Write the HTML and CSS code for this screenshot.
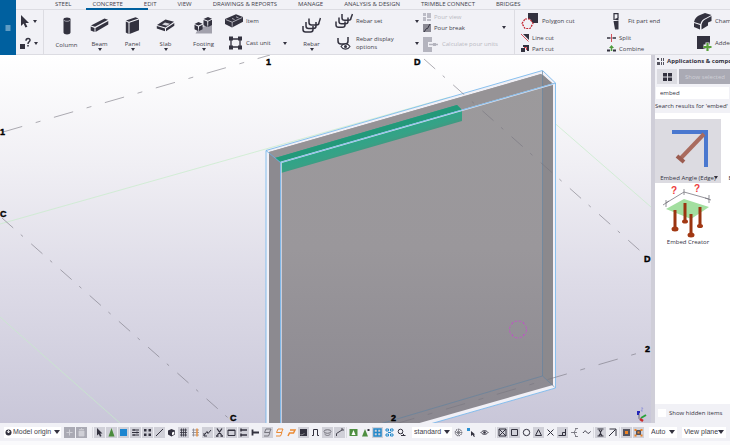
FILE: index.html
```html
<!DOCTYPE html>
<html lang="en">
<head>
    <meta charset="UTF-8">
    <meta name="viewport" content="width=device-width, initial-scale=1.0">
    <title>Model editor</title>
    <link rel="stylesheet" href="styles.css">
</head>
<body>

<header class="ribbon">
    <button class="main-menu" aria-label="Menu">
        <svg width="6" height="6" viewBox="0 0 6 6"><path d="M0.5 1h5M0.5 3h5M0.5 5h5" stroke="#d5e6f2" stroke-width="0.9"/></svg>
    </button>
    <div class="ribbon-body">
        <nav class="tabs">
            <a href="#">STEEL</a>
            <a href="#" class="active">CONCRETE</a>
            <a href="#">EDIT</a>
            <a href="#">VIEW</a>
            <a href="#">DRAWINGS &amp; REPORTS</a>
            <a href="#">MANAGE</a>
            <a href="#">ANALYSIS &amp; DESIGN</a>
            <a href="#">TRIMBLE CONNECT</a>
            <a href="#">BRIDGES</a>
        </nav>
        <div class="tools">
            <div class="stack pick">
                <button class="tool tall" aria-label="Select">
                    <svg width="10" height="13" viewBox="0 0 10 13"><path d="M1 0v11l2.6-2.4 1.8 4 2-.9-1.9-3.8H9z" fill="#33323f"/></svg>
                    <i class="caret"></i>
                </button>
                <button class="tool tall" aria-label="Inquire">
                    <svg width="11" height="13" viewBox="0 0 11 13"><path d="M0 7h5v5H0z" fill="#33323f"/><path d="M6 3.8C6 .6 10.2.8 10 3.3 9.9 4.900 8 4.800 8 7M8 8v1.500" fill="none" stroke="#33323f" stroke-width="1.500"/></svg>
                    <i class="caret"></i>
                </button>
            </div>

            <div class="big-tools">
                <button class="big plain">
                    <svg width="8" height="18" viewBox="0 0 8 18"><path d="M.5 2.500v13c0 2.500 7 2.500 7 0v-13z" fill="#33323f"/><ellipse cx="4" cy="2.200" rx="3.500" ry="1.700" fill="#33323f"/><path d="M.8 3.200c1 1.500 5.400 1.500 6.400 0" fill="none" stroke="#c9c9d2" stroke-width=".7"/></svg>
                    <span>Column</span>
                </button>
                <button class="big">
                    <svg width="19" height="16" viewBox="0 0 19 16"><path d="M1 8.500 14.500 1.500l3.500 1.200L5 9.800z" fill="#33323f"/><path d="M.7 9.500 4.500 11v4L.7 13.500zM5.500 11 18.300 4v3.500L5.500 15z" fill="#33323f"/></svg>
                    <span>Beam</span><i class="caret"></i>
                </button>
                <button class="big">
                    <svg width="15" height="17" viewBox="0 0 15 17"><path d="M1 3.500 10.500.3 13.500 1.500 4 4.800z" fill="#33323f"/><path d="M.8 4.500 3.500 5.700V17L.8 15.500zM4.500 5.700 14 2.400v10.800L4.500 17z" fill="#33323f"/></svg>
                    <span>Panel</span><i class="caret"></i>
                </button>
                <button class="big">
                    <svg width="19" height="14" viewBox="0 0 19 14"><path d="M1 7 9.500 1.500l8.500 2.300L9.500 9.600z" fill="#33323f"/><path d="M.8 8 9 10.600v2.700L.8 10.600zM10 10.500 18.300 5v2.800L10 13.300z" fill="#33323f"/><path d="M6 6.500l5 1.300 3-2-5-1.300z" fill="#d5d5dc"/></svg>
                    <span>Slab</span><i class="caret"></i>
                </button>
                <button class="big wide">
                    <svg width="19" height="18" viewBox="0 0 19 18"><path d="M5 12 18 8v9.500H1.500z" fill="#a2a1ac"/><path d="M.5 8 4.500 6l4 1.700-4 1.900zM.5 8.800 4 10.500V15L.5 13.200zM5 10.500l3.600-1.700v4.500L5 15zM9.500 3 14 1l4 1.700-4 2zM9.500 4l3.800 1.500v5.400L9.500 9.200zM14.200 5.500 18 3.700v5.200l-3.800 2z" fill="#33323f"/></svg>
                    <span>Footing</span><i class="caret"></i>
                </button>
            </div>

            <div class="stack cast">
                <button class="tool tall">
                    <svg width="18" height="14" viewBox="0 0 18 14"><path d="M0 5 11 .3 18 3v4.800L7 13.500 0 10z" fill="#33323f"/><path d="M.8 5.600 7.200 8.200 17.300 3.500M7.200 8.200v4.500M7 4.500l2.500 1M11 2.800l2.500 1" fill="none" stroke="#c9c9d2" stroke-width=".8"/></svg>
                    <span>Item</span>
                </button>
                <button class="tool tall">
                    <svg width="18" height="14" viewBox="0 0 18 14"><path d="M6 3h9v8H6z" fill="none" stroke="#33323f" stroke-width="1.300"/><path d="M4 .5h4v4H4zM13 .5h4v4h-4zM4 9.500h4v4H4zM13 9.500h4v4h-4z" fill="#33323f"/></svg>
                    <span>Cast unit</span>
                    <i class="caret push"></i>
                </button>
            </div>

            <div class="big-tools">
                <button class="big">
                    <svg width="19" height="17" viewBox="0 0 19 17"><g fill="none" stroke="#33323f" stroke-width="1.500"><path d="M7 1.500v4c0 2 1 2.500 2.500 2.500h5c1.500 0 2.500-1 2.500-2.500L18.500 1M4 5v4c0 2 1 2.500 2.500 2.500h5c1.500 0 2.500-1 2.500-2.500V5M1 9v3.500C1 14.500 2 15 3.500 15h5c1.500 0 2.500-1 2.500-2.500V9"/></g></svg>
                    <span>Rebar</span><i class="caret"></i>
                </button>
            </div>

            <div class="stack rebars">
                <button class="tool tall">
                    <svg width="18" height="16" viewBox="0 0 18 16"><g fill="none" stroke="#33323f" stroke-width="1.500"><path d="M7 1v4c0 1.700 1 2.300 2.500 2.300h4C15 7.300 16 6.500 16 5l1.500-4M4 4.500v4c0 1.700 1 2.300 2.500 2.300h4c1.500 0 2.500-.8 2.500-2.300v-4M1 8.500V12c0 1.700 1 2.300 2.500 2.300h4c1.500 0 2.500-.8 2.500-2.300V8.500"/></g></svg>
                    <span>Rebar set</span>
                    <i class="caret push"></i>
                </button>
                <button class="tool tall">
                    <svg width="18" height="13" viewBox="0 0 18 13"><path d="M3 1v3c0 2 1 3 3 3h4c2 0 3-1 3-3V0" fill="none" stroke="#33323f" stroke-width="1.500"/><path d="M6 9.500c2-3.500 7-3.500 9 0-2 3.500-7 3.500-9 0z" fill="#f1f1f6" stroke="#33323f" stroke-width="1.100"/><circle cx="10.500" cy="9.500" r="1.500" fill="#33323f"/></svg>
                    <span>Rebar display<br>options</span>
                    <i class="caret push"></i>
                </button>
            </div>

            <div class="stack pour">
                <button class="tool" disabled>
                    <svg width="8" height="8" viewBox="0 0 8 8"><path d="M0 0h3v3H0zM4 0h4v5H4zM0 4h3v4H0zM4 6h4v2H4z" fill="#bcbcc6"/></svg>
                    <span>Pour view</span>
                </button>
                <button class="tool">
                    <svg width="8" height="8" viewBox="0 0 8 8"><path d="M0 0h8v8H0z" fill="#8a8993"/><path d="M1 8 3.500 4.500h1L7 0" fill="none" stroke="#33323f"/></svg>
                    <span>Pour break</span>
                    <i class="caret push"></i>
                </button>
                <button class="tool tall" disabled>
                    <svg width="16" height="15" viewBox="0 0 16 15"><path d="M0 0h9v5H5v5h4v5H0z" fill="#b4b4be"/><path d="M6 7.500h9" stroke="#b4b4be" stroke-width="1.500"/><path d="M10 6h3v3h-3z" fill="#b4b4be"/></svg>
                    <span>Calculate pour units</span>
                </button>
            </div>

            <div class="stack cuts">
                <button class="tool tall">
                    <svg width="18" height="17" viewBox="0 0 18 17"><path d="M7 0h10v10h-6L7 6z" fill="#33323f"/><path d="M4 6h5l3 4.500-3 5H4l-3-5z" fill="#f1f1f6" stroke="#c3242f" stroke-width="1.200" stroke-dasharray="2 1"/></svg>
                    <span>Polygon cut</span>
                </button>
                <button class="tool">
                    <svg width="8" height="8" viewBox="0 0 8 8"><path d="M2 0h6v6z" fill="#33323f"/><path d="M0 0l7.500 7.500" stroke="#d0404a" stroke-width=".9"/></svg>
                    <span>Line cut</span>
                </button>
                <button class="tool">
                    <svg width="8" height="8" viewBox="0 0 8 8"><path d="M2 0h6v6H6V2H2z" fill="#33323f"/><path d="M0 3h4v4H0z" fill="#33323f"/><path d="M3 2.500h2.500V5" fill="none" stroke="#d0404a"/></svg>
                    <span>Part cut</span>
                </button>
            </div>

            <div class="stack joins">
                <button class="tool tall indent">
                    <svg width="12" height="17" viewBox="0 0 12 17"><path d="M.5 8h5v8.500H2zM.5 6.500l5-2v3z" fill="#33323f"/><path d="M1 7V.7h4V5" fill="none" stroke="#33323f" stroke-width="1.200"/></svg>
                    <span>Fit part end</span>
                </button>
                <button class="tool">
                    <svg width="9" height="8" viewBox="0 0 9 8"><path d="M0 4h3.500M5.500 4H9" stroke="#33323f" stroke-width="1.500"/><path d="M4.500 0v8" stroke="#d0404a" stroke-width=".9"/></svg>
                    <span>Split</span>
                </button>
                <button class="tool">
                    <svg width="9" height="8" viewBox="0 0 9 8"><path d="M0 5.500h3M6 5.500h3" stroke="#33323f" stroke-width="2"/><path d="M4.500 0 7 3H5.300v3H3.700V3H2z" fill="#4f9a3c"/></svg>
                    <span>Combine</span>
                </button>
            </div>

            <div class="stack details">
                <button class="tool tall">
                    <svg width="18" height="17" viewBox="0 0 18 17"><path d="M0 9C1 5 3 3 6 2l5-2 6.500 2L12 5C9 6 7 8 6.500 11z" fill="#33323f"/><path d="M0 10l6 2v4.500L0 14zM7.500 12c.5-3 2-5 4.500-6l5.500-3v5L14 9.500v3L7.500 16.500z" fill="#33323f"/></svg>
                    <span>Chamfer</span>
                </button>
                <button class="tool tall">
                    <svg width="18" height="15" viewBox="0 0 18 15"><path d="M3 0h13v13H3z" fill="#33323f"/><path d="M13.500 6.500v8M9.500 10.500h8" stroke="#f1f1f6" stroke-width="4"/><path d="M13.500 7v8M9.500 11h8" stroke="#5aa13c" stroke-width="2.200"/></svg>
                    <span>Added material</span>
                </button>
            </div>
        </div>
    </div>
</header>

<main class="workspace">
    <section class="viewport">
        <svg class="scene" viewBox="0 54 651 369" preserveAspectRatio="xMinYMin slice">
            <defs>
                <linearGradient id="front" x1="0" y1="0" x2="0" y2="1">
                    <stop offset="0" stop-color="#9c9a9c"/>
                    <stop offset="0.5" stop-color="#9a979b"/>
                    <stop offset="1" stop-color="#8b8890"/>
                </linearGradient>
                <linearGradient id="embed" gradientUnits="userSpaceOnUse" x1="350" y1="136" x2="356" y2="156">
                    <stop offset="0" stop-color="#2ba588"/>
                    <stop offset="0.6" stop-color="#36a286"/>
                    <stop offset="1" stop-color="#4c8f7c"/>
                </linearGradient>
            </defs>

            <!-- work area -->
            <g class="work-area">
                <path d="M0 223 450 96M0 316l121 107M543 112l108 94"/>
            </g>

            <!-- grid lines behind the panel -->
            <g class="grid-line">
                <path class="across" d="M3 131 270 54"/>
                <path class="deep" d="M2 217l233 206"/>
            </g>

            <!-- concrete panel -->
            <path d="M266 150 543 69l13 13v305l-126 36H266z" fill="#f1f0f6"/>
            <path d="M269 151l272-78 12 10v301l-137 39H269z" fill="url(#front)"/>
            <path d="M269 151l12 10v262h-12z" fill="#8c8a90"/>
            <path d="M269 151l272-78 12 10-272 78z" fill="#969396"/>
            <path d="M543 74l10 9v301l-10-9z" fill="#8b898d"/>
            <path d="M275 157 457 104l5 5v11l-181 52v-10z" fill="url(#embed)"/>
            <path d="M275 157 457 104l5 5-181 52z" fill="#23997a"/>
            <path class="hidden-edge" d="M542.500 70v305L380 423M542.500 375l12 11"/>
            <path class="light-edge" d="M280.500 161.500 555 82.500M281 161v262"/>
            <path class="edge" d="M266 423V149.500L542.500 69.500l13 12.500v305L430 423M266 149.500l14.500 12 275-79.500M280.500 161.500V423"/>

            <g class="grid-line">
                <path class="deep" d="M424 58l222 197"/>
                <path class="across" d="M395 423 642 351"/>
            </g>

            <circle cx="518" cy="328.500" r="8.500" fill="none" stroke="#bb5fc0" stroke-dasharray="3 1.500"/>
            <path d="M512 322h1M523 322h1M512 334h1M523 334h1" stroke="#c04cc8" stroke-width="1.500"/>

            <g class="grid-label">
                <text x="266" y="64">1</text>
                <text x="414" y="64">D</text>
                <text x="0" y="134">1</text>
                <text x="0" y="216">C</text>
                <text x="230" y="420">C</text>
                <text x="391" y="420">2</text>
                <text x="644" y="261">D</text>
                <text x="645" y="351">2</text>
            </g>

            <!-- axis marker -->
            <g fill="none">
                <path d="M639 412v5l3 2" stroke="#9a98a5" stroke-width="2"/>
                <path d="M638 414v-4M637 411h3" stroke="#2325b8" stroke-width="2"/>
                <path d="M641 417l5-3" stroke="#29a33b" stroke-width="2"/>
                <path d="M640 418l3 2" stroke="#c92b2b" stroke-width="2.500"/>
                <path d="M641 407l2 0-2 3h2" stroke="#8b8cd8" stroke-width=".7"/>
            </g>
        </svg>
    </section>

    <aside class="catalog">
        <h2 class="catalog-title">
            <svg width="7" height="7" viewBox="0 0 7 7"><path d="M0 0h2v2H0zM0 4h3v3H0zM4 0h1v3H4zM6 0h1v3H6zM4 4h1v3H4zM6 4h1v3H6z" fill="#55545f"/></svg>
            Applications &amp; components
        </h2>
        <div class="catalog-bar">
            <button class="view-mode" aria-label="Thumbnails">
                <svg width="9" height="8" viewBox="0 0 9 8"><path d="M0 0h4v3.500H0zM5 0h4v3.500H5zM0 4.500h4V8H0zM5 4.500h4V8H5z" fill="#33323f"/></svg>
            </button>
            <button class="show-selected" disabled>Show selected</button>
        </div>
        <input class="search" type="text" value="embed" aria-label="Search">
        <p class="result-text">Search results for 'embed'</p>
        <div class="tiles">
            <button class="tile selected">
                <svg width="66" height="54" viewBox="0 0 66 54"><path d="M17 10h36v37h-4V14H17z" fill="#4a78cf"/><path d="M49 14 26 38" stroke="#a96b5e" stroke-width="4"/><path d="M22 36l7 6" stroke="#9b5c50" stroke-width="4"/></svg>
                <span>Embed Angle (Edge)</span>
                <i class="caret tile-caret"></i>
            </button>
            <button class="tile">
                <svg width="66" height="54" viewBox="0 0 66 54"></svg>
                <span>Embed Plate (Face)</span>
            </button>
            <button class="tile">
                <svg width="66" height="54" viewBox="0 0 66 54">
                    <path d="M11 25 29 15l25 8-18 12z" fill="#a3dfa0"/>
                    <path d="M20 26v20M30 19v18M36 30v22M45 23v19" stroke="#9a3410" stroke-width="3"/>
                    <g fill="#a23813"><ellipse cx="20" cy="45" rx="3.500" ry="2.500"/><ellipse cx="30" cy="37.500" rx="3" ry="2"/><ellipse cx="36" cy="51" rx="3.500" ry="2.500"/><ellipse cx="45" cy="42" rx="3" ry="2"/></g>
                    <path d="M11 19 29 8l25 7M11 16v7M29 5v6M54 11v8M8 21l6-4M50 14l6 2" fill="none" stroke="#77767f" stroke-width=".8"/>
                    <text class="mark" x="16" y="10">?</text>
                    <text class="mark" x="39" y="8">?</text>
                </svg>
                <span>Embed Creator</span>
            </button>
        </div>
        <label class="hidden-items"><input type="checkbox"> Show hidden items</label>
    </aside>
</main>

<footer class="status">
    <label class="picker origin">
        <svg width="7" height="7" viewBox="0 0 7 7"><circle cx="3.500" cy="3.500" r="3" fill="#33323f"/><path d="M3.500 1v3M2 2l1.500 2L5 2" stroke="#fff" stroke-width=".8" fill="none"/></svg>
        <select aria-label="Origin"><option>Model origin</option></select>
        <i class="caret"></i>
    </label>
    <div class="group actions">
        <button class="off" disabled aria-label="Add"><svg viewBox="0 0 11 11"><path d="M5.500 2.500v6M2.500 5.500h6" stroke="#d0d0d7"/></svg></button>
        <button class="off" disabled aria-label="Delete"><svg viewBox="0 0 11 11"><path d="M3 4h5v5H3zM3 2.500h5M5 1.500h1" fill="#d0d0d7" stroke="#d0d0d7" stroke-width=".8"/></svg></button>
    </div>
    <div class="group first">
        <button class="on" aria-label="Select all"><svg viewBox="0 0 11 11"><path d="M3 1v7.500l1.800-1.600L6 9.800l1.500-.7-1.300-2.700h2.300z" fill="#33323f"/></svg></button>
        <button class="on" aria-label="Components"><svg viewBox="0 0 11 11"><path d="M5.500 1 8.500 9.500h-6z" fill="#4a8b3c"/></svg></button>
        <button class="on" aria-label="Parts"><svg viewBox="0 0 11 11"><path d="M2 2h7v7H2z" fill="#1d86d0"/></svg></button>
        <button class="on" aria-label="Surfaces"><svg viewBox="0 0 11 11"><path d="M2 3h7M2 5.500h7M2 8h7M4 2v2M7 4.500v2M4 7v2" stroke="#33323f"/></svg></button>
        <button class="on" aria-label="Points"><svg viewBox="0 0 11 11"><path d="M2 2h2.500v2.500H2zM6.500 2H9v2.500H6.500zM2 6.500h2.500V9H2zM6.500 6.500H9V9H6.500z" fill="#33323f"/></svg></button>
        <button class="on" aria-label="Lines"><svg viewBox="0 0 11 11"><path d="M2 9 9 2" stroke="#33323f"/></svg></button>
        <button aria-label="Solids"><svg viewBox="0 0 11 11"><path d="M2 3.500 5.500 2 9 3.500v4L5.500 9.500 2 7.500z" fill="#33323f"/><path d="M6 5.500 8.300 4.500v2.700L6 8.300z" fill="#fff"/></svg></button>
        <button class="on" aria-label="Grids"><svg viewBox="0 0 11 11"><path d="M2 3h7M2 5.500h7M2 8h7M3.500 1.500v8M5.500 1.500v8M7.500 1.500v8" stroke="#33323f" stroke-width=".8"/></svg></button>
        <button aria-label="Grid line"><svg viewBox="0 0 11 11"><path d="M2 3h7M2 5.500h7M2 8h7M3.500 1.500v8" stroke="#85848e" stroke-width=".8"/><path d="M7 1.500v8" stroke="#e59042" stroke-width="1.500"/></svg></button>
        <button class="on" aria-label="Welds"><svg viewBox="0 0 11 11"><path d="M2 8.500 5 4.500l1 2L9 3M2 6v3h3" stroke="#33323f" fill="none"/></svg></button>
        <button class="on" aria-label="Cuts"><svg viewBox="0 0 11 11"><path d="M3 1.500 7.500 8M8 1.500 3.500 8M2 9h2.500M6.500 9H9" stroke="#33323f" stroke-width="1.300"/></svg></button>
        <button class="on" aria-label="Views"><svg viewBox="0 0 11 11"><path d="M2 3h7v5.500H2zM2 3.500h7" stroke="#33323f" fill="none"/></svg></button>
        <button class="on" aria-label="Bolts"><svg viewBox="0 0 11 11"><path d="M3 1.500v3M3 6.500v3M3 3h6M3 8h6" stroke="#33323f" stroke-width="1.500"/></svg></button>
        <button aria-label="Single bolts"><svg viewBox="0 0 11 11"><path d="M2.500 2.500v6M2.500 5.500H9" stroke="#33323f" stroke-width="1.800"/></svg></button>
        <button class="on" aria-label="Rebar sets"><svg viewBox="0 0 11 11"><path d="M4 2h5L7.500 5.500h-5zM4 5.500h4L6.500 9H2" stroke="#77767f" fill="none"/></svg></button>
        <button aria-label="Rebar groups"><svg viewBox="0 0 11 11"><path d="M4 2h5L7.500 5.500h-5zM4 5.500h4L6.500 9H2" stroke="#ea8a35" fill="none"/></svg></button>
        <button aria-label="Rebars"><svg viewBox="0 0 11 11"><path d="M4 3h5L7.500 6H3.500L2 9" stroke="#ea8a35" stroke-width="1.500" fill="none"/></svg></button>
        <button class="on" aria-label="Pours"><svg viewBox="0 0 11 11"><path d="M2 2h7v7H2z" fill="#33323f"/><path d="M2.500 7.500c2 1 3-1 4-1" stroke="#bbb" stroke-width=".6" fill="none"/></svg></button>
        <button aria-label="Loads"><svg viewBox="0 0 11 11"><path d="M2 8.500h1.500v-6h4v6H9" stroke="#33323f" fill="none"/></svg></button>
        <button class="on" aria-label="Planes"><svg viewBox="0 0 11 11"><ellipse cx="5.500" cy="4.500" rx="3.500" ry="1.800" stroke="#77767f" fill="none"/><path d="M2.500 7c2 2 4 2 6 0" stroke="#77767f" fill="none"/></svg></button>
        <button class="on" aria-label="Distances"><svg viewBox="0 0 11 11"><path d="M2.500 9V6.500L8 3M7 2h2v2" stroke="#44434f" fill="none"/></svg></button>
    </div>
    <div class="group">
        <button aria-label="Select components"><svg viewBox="0 0 11 11"><path d="M1.500 2h8v7h-8z" fill="#4f8f42"/><path d="M5.500 3 7.500 8h-4z" fill="#fff"/></svg></button>
        <button aria-label="Select in components"><svg viewBox="0 0 11 11"><path d="M5 2 8 9.500H2z" fill="#4f8f42"/><path d="M7.500 2h2v2h-2z" fill="#33323f"/></svg></button>
        <button class="on" aria-label="Select assemblies"><svg viewBox="0 0 11 11"><path d="M2 2h7v7H2zM2 5.500h7M5.500 2v7" stroke="#2489ca" stroke-width="1.500" fill="none"/></svg></button>
        <button aria-label="Select in assemblies"><svg viewBox="0 0 11 11"><path d="M2 2h2.500v2H2zM6.500 2H9v2H6.500zM2 7h2.500v2H2zM6.500 7H9v2H6.500zM4 5.500h3" stroke="#2489ca" fill="none"/></svg></button>
        <button aria-label="Select task"><svg viewBox="0 0 11 11"><circle cx="4.500" cy="4.500" r="2.300" stroke="#33323f" fill="none"/><path d="M5 8.500h4.500M6.500 6.500l2 2" stroke="#33323f"/></svg></button>
    </div>
    <label class="picker filter">
        <select aria-label="Selection filter"><option>standard</option></select>
        <i class="caret"></i>
    </label>
    <div class="group spaced">
        <button aria-label="Filter"><svg viewBox="0 0 11 11"><circle cx="5.500" cy="5.500" r="3.300" fill="none" stroke="#33323f" stroke-dasharray="1 .8"/><path d="M3.500 3.500l4 4M7.500 3.500l-4 4M5.500 2.500v6M2.500 5.500h6" stroke="#66656f" stroke-width=".7"/></svg></button>
        <button aria-label="Smart select"><svg viewBox="0 0 11 11"><path d="M1 1h3v3H1z" fill="#2b90d2"/><path d="M5 4v5l1.500-1.300L8 10l.9-.5-1.100-2h1.400z" fill="#33323f"/></svg></button>
        <button aria-label="Visibility"><svg viewBox="0 0 11 11"><path d="M2 5.500c2-2.500 5-2.500 7 0-2 2.500-5 2.500-7 0z" stroke="#33323f" fill="none"/><circle cx="5.500" cy="5.500" r="1.300" fill="#33323f"/></svg></button>
    </div>
    <div class="group first">
        <button class="on" aria-label="Snap points"><svg viewBox="0 0 11 11"><path d="M2 2h7v7H2zM2 2l7 7M9 2 2 9" stroke="#33323f" fill="none"/></svg></button>
        <button class="on" aria-label="Snap end points"><svg viewBox="0 0 11 11"><path d="M2.500 2.500h6v6h-6z" stroke="#33323f" fill="none"/></svg></button>
        <button aria-label="Snap centers"><svg viewBox="0 0 11 11"><circle cx="5.500" cy="5.500" r="3.200" stroke="#33323f" fill="none"/></svg></button>
        <button class="on" aria-label="Snap midpoints"><svg viewBox="0 0 11 11"><path d="M5.500 2.500l3 6h-6z" stroke="#33323f" fill="none"/></svg></button>
        <button aria-label="Snap intersections"><svg viewBox="0 0 11 11"><path d="M2.500 2.500l6 6M8.500 2.500l-6 6" stroke="#33323f"/></svg></button>
        <button class="on" aria-label="Snap perpendicular"><svg viewBox="0 0 11 11"><path d="M1.500 8.500h7V2M5.500 8V5.500h3" stroke="#33323f" fill="none"/></svg></button>
        <button aria-label="Snap extensions"><svg viewBox="0 0 11 11"><path d="M6 1.500h3M6 9.500h3M7 2 5 5.500l2 4M2 5.500h6" stroke="#66656f" fill="none" stroke-width=".8"/></svg></button>
        <button aria-label="Snap free"><svg viewBox="0 0 11 11"><path d="M2 6c2-3 3-2 4-.5s2 1 3.500-1" stroke="#33323f" fill="none"/></svg></button>
    </div>
    <div class="group">
        <button class="on" aria-label="Snap to reference lines"><svg viewBox="0 0 11 11"><path d="M2.500 2h6M2.500 9h6M4 3l1.500 2v1.500L4 8.500M7 3 5.500 5v1.500L7 8.500" stroke="#33323f" fill="none" stroke-width="1.200"/></svg></button>
        <button aria-label="Snap to geometry"><svg viewBox="0 0 11 11"><path d="M2 9l6.500-6.500M2.500 2h6.500v7" stroke="#33323f" fill="none"/></svg></button>
    </div>
    <div class="group">
        <button class="on" aria-label="Direct modification"><svg viewBox="0 0 11 11"><path d="M2 2h7v7H2z" fill="#55545f"/><path d="M4 4h3v3H4z" fill="#ef8424"/></svg></button>
        <button class="on" aria-label="Handles"><svg viewBox="0 0 11 11"><path d="M3 3h5v5H3z" fill="#55545f"/><path d="M1.500 2h2v2h-2zM7.500 2h2v2h-2zM1.500 7.500h2v2h-2zM7.500 7.500h2v2h-2zM4.500 4.500h2v2h-2z" fill="#ef8424"/></svg></button>
    </div>
    <label class="picker depth">
        <select aria-label="Snap depth"><option>Auto</option></select>
        <i class="caret"></i>
    </label>
    <label class="picker plane">
        <select aria-label="Plane"><option>View plane</option></select>
        <i class="caret"></i>
    </label>
</footer>

</body>
</html>
```
FILE: styles.css
```css
* {
    box-sizing: border-box;
}

body {
    font-family: 'Open Sans', 'Noto Sans', sans-serif;
    font-size: 6px;
    line-height: 8px;
    color: #3f3e4a;
    background-color: #fafafc;
    margin: 0;
    padding-bottom: 4px;
    display: flex;
    flex-direction: column;
    height: 100vh;
    overflow: hidden;
}

button, input, select {
    font: inherit;
    color: inherit;
    margin: 0;
    padding: 0;
    border: none;
    background: none;
}

button {
    cursor: pointer;
}

svg {
    display: block;
    flex: none;
}

.caret {
    border: 2px solid transparent;
    border-top: 3px solid #33323f;
    border-bottom: none;
    flex: none;
}

/* ribbon */
.ribbon {
    display: flex;
    background-color: #f1f1f6;
}

.main-menu {
    width: 16px;
    background-color: #00609f;
    display: flex;
    align-items: center;
    justify-content: center;
}

.ribbon-body {
    flex: 1;
    min-width: 0;
    border-bottom: 1px solid #dcdce2;
}

.tabs {
    display: flex;
    gap: 21px;
    height: 10px;
    padding-left: 39px;
    border-bottom: 1px solid #dcdce2;
}

.tabs a {
    color: #3f3e4a;
    text-decoration: none;
    white-space: nowrap;
}

.tabs .active {
    position: relative;
}

.tabs .active::after {
    content: '';
    position: absolute;
    left: -6px;
    right: -25px;
    top: 8px;
    height: 2px;
    background-color: #00609f;
}

.tools {
    display: flex;
    height: 44px;
    overflow: hidden;
}

.stack {
    display: grid;
    grid-template-rows: repeat(4, 11px);
    flex: none;
}

.tool {
    display: flex;
    align-items: center;
    gap: 3px;
    text-align: left;
    white-space: nowrap;
}

.tall {
    grid-row: span 2;
}

.tool:disabled {
    color: #b9b9c2;
}

.push {
    margin-left: auto;
}

.pick {
    width: 28px;
    padding-left: 4px;
    border-right: 1px solid #dcdce2;
}

.pick .tool {
    gap: 3px;
}

.big-tools {
    display: flex;
    padding-left: 6px;
}

.big {
    width: 33px;
    display: flex;
    flex-direction: column;
    align-items: center;
    justify-content: flex-end;
    padding-bottom: 3px;
}

.big svg {
    margin: auto;
}

.plain {
    padding-bottom: 5px;
}

.big.wide {
    width: 43px;
}

.cast {
    width: 64px;
    padding-right: 2px;
}

.rebars {
    width: 91px;
    padding-left: 7px;
}

.pour {
    width: 95px;
    padding: 1px 8px 0 4px;
}

.cuts {
    width: 93px;
    padding-left: 6px;
    border-left: 1px solid #dcdce2;
}

.joins {
    width: 87px;
}

.indent {
    padding-left: 6px;
}

/* model view */
.workspace {
    flex: 1;
    min-height: 0;
    display: flex;
}

.viewport {
    flex: 1;
    min-width: 0;
    background: linear-gradient(#ffffff, #f0eff4 30%, #dddbe7 62%, #c9c7d9);
}

.scene {
    width: 100%;
    height: 100%;
}

.work-area {
    fill: none;
    stroke: #c6ecc8;
    stroke-width: 0.7;
}

.grid-line {
    fill: none;
    stroke: #77767f;
    stroke-width: 0.6;
}

.across {
    stroke-dasharray: 20 14 5 14;
}

.deep {
    stroke-dasharray: 15 10 3 11;
}

.edge {
    fill: none;
    stroke: #6db4ec;
    stroke-width: 0.8;
}

.light-edge {
    fill: none;
    stroke: #e4e6f2;
    stroke-width: 1.4;
}

.hidden-edge {
    fill: none;
    stroke: #64839d;
    stroke-width: 0.7;
}

.grid-label {
    font-family: 'Liberation Sans', Arial, sans-serif;
    font-size: 9px;
    font-weight: bold;
    fill: #000;
    stroke: #000;
    stroke-width: 0.4;
}

/* applications & components */
.catalog {
    width: 79px;
    flex: none;
    display: flex;
    flex-direction: column;
    background-color: #fff;
    border-left: 4px solid #cfced8;
    overflow: hidden;
    white-space: nowrap;
    color: #33323f;
}

.catalog-title {
    display: flex;
    align-items: center;
    gap: 3px;
    margin: 0;
    padding: 2px 2px 3px;
    font-size: 6px;
    font-weight: bold;
    background-color: #f1f1f6;
}

.catalog-bar {
    display: flex;
    gap: 2px;
    padding: 1px 0 2px 2px;
    background-color: #f1f1f6;
}

.view-mode {
    width: 20px;
    height: 15px;
    display: flex;
    align-items: center;
    justify-content: center;
    background-color: #dcdce2;
    flex: none;
}

.show-selected {
    padding: 0 6px;
    flex: none;
    background-color: #aaaab4;
    color: #d0d0d7;
}

.search {
    width: 100%;
    height: 14px;
    padding: 0 4px;
    border: 1px solid #f1f1f6;
    background-color: #fff;
}

.result-text {
    margin: 0;
    padding: 2px 0 3px;
    background-color: #f1f1f6;
}

.tiles {
    flex: 1;
    display: grid;
    grid-template-columns: 66px 66px;
    grid-auto-rows: 64px;
    column-gap: 1px;
    padding-top: 6px;
}

.tile {
    position: relative;
    overflow: hidden;
}

.selected {
    background-color: #dcdbe1;
}

.tile-caret {
    position: absolute;
    right: 3px;
    bottom: 4px;
}

.mark {
    font-family: 'Liberation Sans', Arial, sans-serif;
    font-size: 10px;
    font-weight: bold;
    fill: #ee3b3b;
}

.hidden-items {
    display: flex;
    align-items: center;
    gap: 3px;
    padding: 5px 3px 6px;
    background-color: #f1f1f6;
}

.hidden-items input {
    appearance: none;
    width: 8px;
    height: 8px;
    flex: none;
    background-color: #fff;
}

/* status bar */
.status {
    display: flex;
    align-items: center;
    height: 18px;
    flex: none;
    padding-left: 4px;
    background-color: #f1f1f6;
    font-family: 'Liberation Sans', Arial, sans-serif;
    font-size: 7px;
}

.group {
    display: flex;
    gap: 1px;
    padding: 0 1px;
    flex: none;
}

.group + .group {
    border-left: 1px solid #dcdce2;
}

.group button {
    width: 11px;
    height: 11px;
}

.group .on {
    background-color: #d0d0d8;
}

.group .off {
    background-color: #aaaab4;
}

.actions {
    padding-left: 3px;
}

.first {
    margin-left: 4px;
}

.spaced {
    gap: 2px;
}

.picker {
    display: flex;
    align-items: center;
    height: 11px;
    padding: 0 2px;
    background-color: #fff;
    flex: none;
}

.picker select {
    appearance: none;
    flex: 1;
    min-width: 0;
}

.picker .caret {
    border-width: 4px 3px 0;
}

.origin {
    width: 57px;
    padding: 0 1px;
    gap: 1px;
}

.filter {
    width: 40px;
    margin-left: 4px;
}

.depth {
    width: 28px;
    margin: 0 5px 0 4px;
}

.plane {
    width: 44px;
}
```
